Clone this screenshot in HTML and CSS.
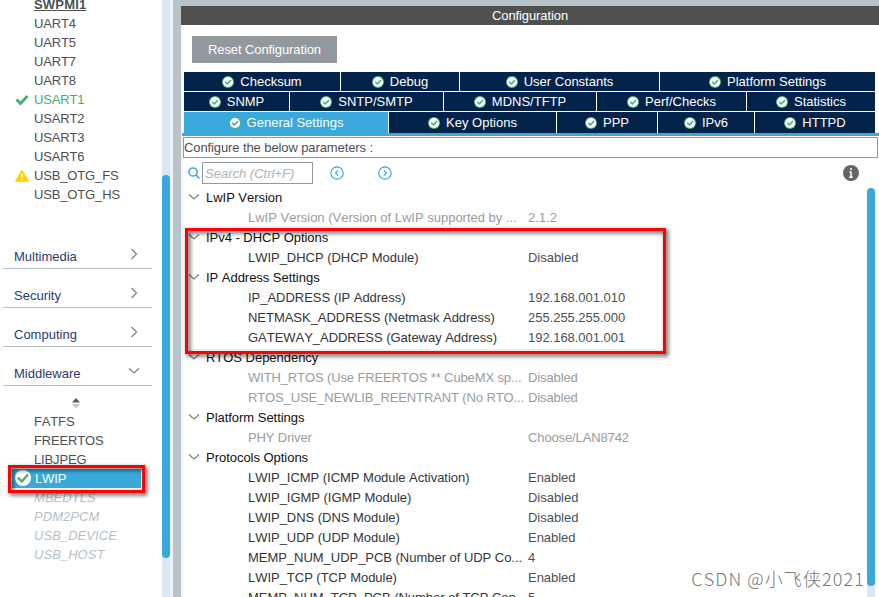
FILE: index.html
```html
<!DOCTYPE html>
<html lang="en">
    <head>
        <meta charset="UTF-8" />
        <meta name="viewport" content="width=device-width, initial-scale=1.0" />
        <title>LWIP Configuration</title>
        <link rel="stylesheet" href="styles.css" />
    </head>
    <body>
        <!-- shared icons -->
        <svg class="defs">
            <symbol id="ok" viewBox="0 0 12 12">
                <circle cx="6" cy="6" r="6" fill="#4fb17a" />
                <circle cx="6" cy="6" r="5.1" fill="#fff" />
                <path d="M3.2 5.8l2.2 2.2 3.6-3.9" fill="none" stroke="#3fae72" stroke-width="1.5" />
            </symbol>
            <symbol id="down" viewBox="0 0 12 8">
                <path d="M1 1.5l5 4.5 5-4.5" fill="none" stroke="#7b7d7f" stroke-width="1.2" />
            </symbol>
            <symbol id="right" viewBox="0 0 8 12">
                <path d="M1.5 1l5 5-5 5" fill="none" stroke="#7b7d7f" stroke-width="1.2" />
            </symbol>
        </svg>

        <div class="app">
            <div class="sidebar">
                <ul class="modules">
                    <li class="group">SWPMI1</li>
                    <li>UART4</li>
                    <li>UART5</li>
                    <li>UART7</li>
                    <li>UART8</li>
                    <li class="active">
                        <svg class="state" viewBox="0 0 14 12"><path d="M1.5 5.5l4 4 7-7.5" fill="none" stroke="#3fae72" stroke-width="2.8" /></svg>USART1
                    </li>
                    <li>USART2</li>
                    <li>USART3</li>
                    <li>USART6</li>
                    <li>
                        <svg class="state" viewBox="0 0 14 12"><path d="M7 1l6 10H1z" fill="#ffd200" stroke="#ffd200" stroke-width="1.6" stroke-linejoin="round" /><path d="M7 3.5v4M7 8.7v1.4" stroke="#fff" stroke-width="1.3" /></svg>USB_OTG_FS
                    </li>
                    <li>USB_OTG_HS</li>
                </ul>

                <div class="categories">
                    <div class="category">Multimedia<svg class="arrow"><use href="#right" /></svg></div>
                    <div class="category">Security<svg class="arrow"><use href="#right" /></svg></div>
                    <div class="category">Computing<svg class="arrow"><use href="#right" /></svg></div>
                    <div class="category">Middleware<svg class="arrow open"><use href="#down" /></svg></div>
                </div>

                <svg class="sorter" viewBox="0 0 8 11">
                    <path d="M4 0l4 4.5H0z" fill="#5a5c5e" />
                    <path d="M0 6h8l-4 4.5z" fill="#c4c6c8" />
                </svg>

                <ul class="modules">
                    <li>FATFS</li>
                    <li>FREERTOS</li>
                    <li>LIBJPEG</li>
                    <li class="selected">
                        <svg class="badge" viewBox="0 0 16 16"><circle cx="8" cy="8" r="8" fill="#fff" /><path d="M2.8 7.5l4 4 6.2-7" fill="none" stroke="#3fae72" stroke-width="2.4" /></svg>LWIP
                        <span class="mark mark-module"></span>
                    </li>
                    <li class="off">MBEDTLS</li>
                    <li class="off">PDM2PCM</li>
                    <li class="off">USB_DEVICE</li>
                    <li class="off">USB_HOST</li>
                </ul>
            </div>

            <div class="side-scroll"><div class="thumb"></div></div>

            <div class="main">
                <h1>Configuration</h1>
                <div class="content">
                    <button class="reset">Reset Configuration</button>

                    <div class="tabs">
                        <div class="tab-row row1">
                            <div class="tab"><svg><use href="#ok" /></svg>Checksum</div>
                            <div class="tab"><svg><use href="#ok" /></svg>Debug</div>
                            <div class="tab"><svg><use href="#ok" /></svg>User Constants</div>
                            <div class="tab"><svg><use href="#ok" /></svg>Platform Settings</div>
                        </div>
                        <div class="tab-row row2">
                            <div class="tab"><svg><use href="#ok" /></svg>SNMP</div>
                            <div class="tab"><svg><use href="#ok" /></svg>SNTP/SMTP</div>
                            <div class="tab"><svg><use href="#ok" /></svg>MDNS/TFTP</div>
                            <div class="tab"><svg><use href="#ok" /></svg>Perf/Checks</div>
                            <div class="tab"><svg><use href="#ok" /></svg>Statistics</div>
                        </div>
                        <div class="tab-row row3">
                            <div class="tab current"><svg><use href="#ok" /></svg>General Settings</div>
                            <div class="tab"><svg><use href="#ok" /></svg>Key Options</div>
                            <div class="tab"><svg><use href="#ok" /></svg>PPP</div>
                            <div class="tab"><svg><use href="#ok" /></svg>IPv6</div>
                            <div class="tab"><svg><use href="#ok" /></svg>HTTPD</div>
                        </div>
                    </div>

                    <div class="panel">
                        <div class="hint">Configure the below parameters :</div>

                        <div class="toolbar">
                            <svg class="magnifier" viewBox="0 0 12 12"><circle cx="5" cy="5" r="4.1" /><path d="M7.9 7.9L11.5 11.5" /></svg>
                            <input type="text" placeholder="Search (Ctrl+F)" />
                            <svg class="nav prev" viewBox="0 0 14 14"><circle cx="7" cy="7" r="6.2" /><path d="M8.2 4.3L5.5 7l2.7 2.7" /></svg>
                            <svg class="nav next" viewBox="0 0 14 14"><circle cx="7" cy="7" r="6.2" /><path d="M5.8 4.3L8.5 7 5.8 9.7" /></svg>
                            <svg class="info" viewBox="0 0 16 16"><circle cx="8" cy="8" r="8" fill="#636466" /><path d="M8 3v2M6.5 7H8v5M6.3 12.2h3.4" fill="none" stroke="#fff" stroke-width="1.5" /></svg>
                        </div>

                        <div class="params">
                            <div class="tree">
                                <div class="head"><svg><use href="#down" /></svg>LwIP Version</div>
                                <div class="row off"><span>LwIP Version (Version of LwIP supported by ...</span><span>2.1.2</span></div>
                                <div class="head"><svg><use href="#down" /></svg>IPv4 - DHCP Options</div>
                                <div class="row"><span>LWIP_DHCP (DHCP Module)</span><span>Disabled</span></div>
                                <div class="head"><svg><use href="#down" /></svg>IP Address Settings</div>
                                <div class="row"><span>IP_ADDRESS (IP Address)</span><span>192.168.001.010</span></div>
                                <div class="row"><span>NETMASK_ADDRESS (Netmask Address)</span><span>255.255.255.000</span></div>
                                <div class="row"><span>GATEWAY_ADDRESS (Gateway Address)</span><span>192.168.001.001</span></div>
                                <div class="head"><svg><use href="#down" /></svg>RTOS Dependency</div>
                                <div class="row off"><span>WITH_RTOS (Use FREERTOS ** CubeMX sp...</span><span>Disabled</span></div>
                                <div class="row off"><span>RTOS_USE_NEWLIB_REENTRANT (No RTO...</span><span>Disabled</span></div>
                                <div class="head"><svg><use href="#down" /></svg>Platform Settings</div>
                                <div class="row off"><span>PHY Driver</span><span>Choose/LAN8742</span></div>
                                <div class="head"><svg><use href="#down" /></svg>Protocols Options</div>
                                <div class="row"><span>LWIP_ICMP (ICMP Module Activation)</span><span>Enabled</span></div>
                                <div class="row"><span>LWIP_IGMP (IGMP Module)</span><span>Disabled</span></div>
                                <div class="row"><span>LWIP_DNS (DNS Module)</span><span>Disabled</span></div>
                                <div class="row"><span>LWIP_UDP (UDP Module)</span><span>Enabled</span></div>
                                <div class="row"><span>MEMP_NUM_UDP_PCB (Number of UDP Co...</span><span>4</span></div>
                                <div class="row"><span>LWIP_TCP (TCP Module)</span><span>Enabled</span></div>
                                <div class="row"><span>MEMP_NUM_TCP_PCB (Number of TCP Con...</span><span>5</span></div>
                                <span class="mark mark-params"></span>
                            </div>
                            <div class="main-scroll"><div class="thumb"></div></div>
                        </div>
                    </div>
                </div>
            </div>
        </div>
        <div class="watermark">CSDN @小飞侠2021</div>
    </body>
</html>
```

FILE: styles.css
```css
body {
    margin: 0;
    height: 597px;
    overflow: hidden;
    position: relative;
    background: #fff;
    font-family: "Liberation Sans", Arial, sans-serif;
    font-size: 13px;
    font-kerning: none;
    color: #4d4f51;
}

.defs {
    position: absolute;
    width: 0;
    height: 0;
}

.app {
    display: flex;
    height: 597px;
}

/* left column */
.sidebar {
    width: 162px;
    flex-shrink: 0;
    overflow: hidden;
}

.modules {
    list-style: none;
    margin: 0;
    padding: 0;
    letter-spacing: -0.15px;
}

.modules li {
    height: 19px;
    line-height: 19px;
    padding-left: 34px;
    position: relative;
}

.modules:first-child {
    margin-top: -5px;
}

.modules .group {
    font-weight: bold;
    text-decoration: underline;
    letter-spacing: 0.2px;
}

.modules .active {
    color: #3fae72;
}

.modules .off {
    color: #b4bfc6;
    font-style: italic;
    letter-spacing: 0.05px;
}

.modules .selected {
    background: #39a9dc;
    color: #fff;
    margin: 0 21px 0 12px;
    padding-left: 23px;
}

.state {
    position: absolute;
    left: 15px;
    top: 4px;
    width: 14px;
    height: 12px;
}

.badge {
    position: absolute;
    left: 3px;
    top: 1px;
    width: 16px;
    height: 16px;
}

.categories {
    margin-top: 26px;
    padding: 0 10px 0 3px;
}

.category {
    display: flex;
    justify-content: space-between;
    align-items: flex-end;
    box-sizing: border-box;
    height: 39px;
    padding: 0 14px 3px 11px;
    border-bottom: 1px solid #b4c0c7;
    line-height: 16px;
    color: #2b3a70;
}

.arrow {
    width: 8px;
    height: 12px;
    margin: 0 0 5px;
}

.arrow.open {
    width: 12px;
    height: 8px;
    margin: 0 -2px 7px 0;
}

.sorter {
    display: block;
    width: 8px;
    height: 11px;
    margin: 12px 0 3px 72px;
}

.thumb {
    background: #39a9dc;
    border-radius: 4px;
}

.side-scroll {
    width: 8px;
    flex-shrink: 0;
    background: #dae8f5;
    border-right: 3px solid #f0f2f3;
}

.side-scroll .thumb {
    height: 383px;
    margin-top: 175px;
}

/* right column */
.main {
    flex: 1;
    min-width: 0;
    display: flex;
    flex-direction: column;
    border-left: 8px solid #b8c4ca;
    border-top: 6px solid #b8c4ca;
}

h1 {
    margin: 0;
    height: 19px;
    line-height: 19px;
    background: #4f514f;
    color: #fff;
    font-size: 13px;
    font-weight: normal;
    letter-spacing: -0.1px;
    text-align: center;
}

.content {
    flex: 1;
    min-height: 0;
}

.reset {
    display: block;
    width: 145px;
    height: 27px;
    margin: 11px 0 9px 11px;
    padding: 0;
    border: none;
    background: #91989e;
    color: #fff;
    font: inherit;
    letter-spacing: -0.1px;
}

.tabs {
    display: flex;
    flex-direction: column;
    gap: 1px;
    margin-left: 1px;
    padding: 0 4px 0 2px;
    border-bottom: 3px solid #39a9dc;
}

.tab-row {
    display: grid;
    column-gap: 1px;
    height: 19px;
}

.row1 {
    grid-template-columns: 156px 118px 199px 1fr;
}

.row2 {
    grid-template-columns: 105px 153px 152px 149px 1fr;
}

.row3 {
    grid-template-columns: 204px 167px 100px 96px 1fr;
    height: 21px;
}

.tab {
    display: flex;
    align-items: center;
    justify-content: center;
    gap: 6px;
    padding-top: 1px;
    background: #03234b;
    color: #fff;
    line-height: 18px;
}

.row3 .tab {
    padding-bottom: 1px;
}

.tab.current {
    background: #39a9dc;
}

.tab svg {
    width: 12px;
    height: 12px;
}

.panel {
    border-left: 2px solid #f0f2f3;
}

.hint {
    height: 19px;
    line-height: 19px;
    margin: 1px 1px 0 0;
    border: 1px solid #91989e;
    letter-spacing: -0.1px;
}

.toolbar {
    display: flex;
    align-items: center;
    height: 22px;
    padding: 4px 20px 3px 5px;
}

.magnifier,
.nav {
    fill: none;
    stroke: #39a9dc;
    stroke-width: 1.2;
}

.magnifier {
    width: 12px;
    height: 12px;
    stroke-width: 1.5;
}

.toolbar input {
    box-sizing: border-box;
    width: 111px;
    height: 22px;
    margin: 0 17px 0 2px;
    padding: 0 2px;
    border: 1px solid #91989e;
    font: inherit;
    font-style: italic;
}

.toolbar input::placeholder {
    color: #b0b2b4;
}

.nav {
    width: 14px;
    height: 14px;
}

.next {
    margin-left: 34px;
}

.info {
    width: 16px;
    height: 16px;
    margin-left: auto;
}

.params {
    display: flex;
    height: 410px;
}

.tree {
    flex: 1;
    position: relative;
}

.head {
    display: flex;
    align-items: center;
    gap: 6px;
    height: 20px;
    padding-left: 5px;
    color: #111;
    letter-spacing: -0.03px;
}

.head svg {
    width: 12px;
    height: 8px;
}

.row {
    display: grid;
    grid-template-columns: 280px 1fr;
    height: 20px;
    line-height: 22px;
    padding-left: 65px;
    white-space: nowrap;
    letter-spacing: -0.03px;
}

.row span:first-child {
    color: #333537;
}

.row.off {
    letter-spacing: -0.12px;
}

.row.off:nth-child(2) {
    letter-spacing: 0;
}

.row.off,
.row.off span:first-child {
    color: #999b9d;
}

.main-scroll {
    width: 8px;
    margin: 1px 2px 0 0;
    background: linear-gradient(#fff 50%, #dae8f5 50%);
    border-right: 2px solid #fff;
}

.main-scroll .thumb {
    height: 398px;
}

/* red frames drawn over the important settings */
.mark {
    position: absolute;
    box-sizing: border-box;
    border: 3px solid #fe0000;
    filter: drop-shadow(2px 2px 2px rgba(0, 0, 0, 0.75));
}

.mark-module {
    left: -4px;
    top: -4px;
    width: 137px;
    height: 28px;
    z-index: 1;
}

.mark-params {
    left: 2px;
    top: 41px;
    width: 481px;
    height: 126px;
}

.watermark {
    position: absolute;
    right: 14px;
    bottom: 6px;
    font-family: "Noto Sans CJK SC", sans-serif;
    font-size: 18px;
    font-weight: 300;
    letter-spacing: 1.1px;
    line-height: 26px;
    color: #77787a;
}
```
